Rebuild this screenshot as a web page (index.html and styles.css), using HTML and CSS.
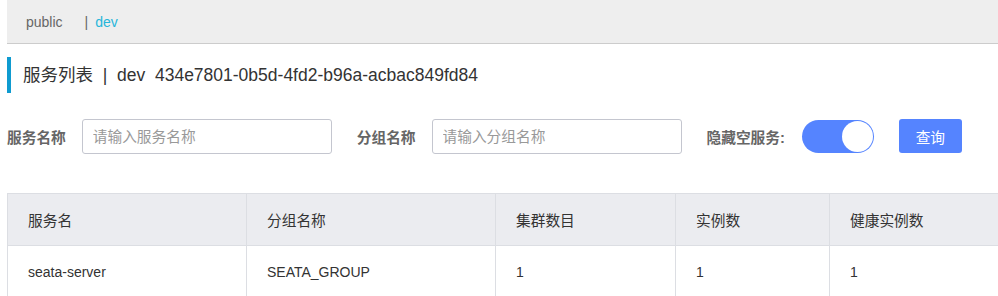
FILE: index.html
```html
<!DOCTYPE html>
<html lang="zh-CN">
<head>
<meta charset="UTF-8">
<meta name="viewport" content="width=device-width, initial-scale=1.0">
<title>服务列表</title>
<link rel="stylesheet" href="styles.css">
</head>
<body>
    <div class="page">
        <!-- Namespace bar -->
        <div class="ns-bar">
            <span class="ns-item">public</span>
            <span class="ns-sep">|</span>
            <span class="ns-item active">dev</span>
        </div>

        <!-- Page title -->
        <h1 class="page-title">服务列表&nbsp;&nbsp;|&nbsp;&nbsp;dev&nbsp;&nbsp;434e7801-0b5d-4fd2-b96a-acbac849fd84</h1>

        <!-- Search form -->
        <div class="search-row">
            <label class="field-label">服务名称</label>
            <input class="field-input" type="text" placeholder="请输入服务名称">
            <label class="field-label">分组名称</label>
            <input class="field-input" type="text" placeholder="请输入分组名称">
            <label class="field-label switch-label">隐藏空服务:</label>
            <span class="switch on"><span class="switch-knob"></span></span>
            <button class="query-btn">查询</button>
        </div>

        <!-- Service table -->
        <table class="service-table">
            <colgroup>
                <col style="width: 239px">
                <col style="width: 249px">
                <col style="width: 180px">
                <col style="width: 154px">
                <col>
            </colgroup>
            <thead>
                <tr>
                    <th>服务名</th>
                    <th>分组名称</th>
                    <th>集群数目</th>
                    <th>实例数</th>
                    <th>健康实例数</th>
                </tr>
            </thead>
            <tbody>
                <tr>
                    <td>seata-server</td>
                    <td>SEATA_GROUP</td>
                    <td>1</td>
                    <td>1</td>
                    <td>1</td>
                </tr>
            </tbody>
        </table>
    </div>
</body>
</html>
```

FILE: styles.css
```css
/* General Reset */
* {
    margin: 0;
    padding: 0;
    box-sizing: border-box;
}

body {
    width: 100%;
    font-family: "Liberation Sans", Arial, "Noto Sans CJK SC", sans-serif;
    font-size: 14px;
    color: #333;
    background: #fff;
    overflow: hidden;
}

.page {
    padding-left: 7px;
}

/* Namespace bar */
.ns-bar {
    display: flex;
    align-items: center;
    height: 44px;
    padding-left: 19px;
    background-color: #eeeeee;
    border-bottom: 1px solid #cccccc;
    color: #666;
    font-size: 14px;
}

.ns-sep {
    margin-left: 22px;
    margin-right: 7px;
    color: #666;
}

.ns-item.active {
    color: #27b6da;
}

/* Title */
.page-title {
    margin-top: 13px;
    height: 36px;
    line-height: 37px;
    padding-left: 12px;
    border-left: 4px solid #0f9bd0;
    font-size: 17.5px;
    font-weight: normal;
    color: #333;
}

/* Search form */
.search-row {
    display: flex;
    align-items: center;
    margin-top: 26px;
    height: 34px;
}

.field-label {
    font-size: 14.7px;
    font-weight: bold;
    color: #666;
    margin-right: 16px;
}

.field-label.switch-label {
    margin-right: 17px;
}

.field-input {
    width: 250px;
    height: 35px;
    padding: 2px 10px 0;
    margin-right: 25px;
    border: 1px solid #c4c6cf;
    border-radius: 3px;
    font-family: inherit;
    font-size: 14.7px;
    color: #333;
    outline: none;
}

.field-input::placeholder {
    color: #999;
}

.switch {
    display: inline-flex;
    align-items: center;
    justify-content: flex-end;
    width: 72px;
    height: 33px;
    padding: 1px;
    border-radius: 17px;
    background-color: #5584ff;
    margin-right: 25px;
}

.switch-knob {
    width: 31px;
    height: 31px;
    border-radius: 50%;
    background-color: #fff;
}

.query-btn {
    width: 63px;
    height: 34px;
    border: none;
    border-radius: 3px;
    background-color: #5584ff;
    color: #fff;
    font-family: inherit;
    font-size: 14.7px;
    cursor: pointer;
}

/* Table */
.service-table {
    margin-top: 40px;
    width: 992px;
    border-collapse: collapse;
    table-layout: fixed;
}

.service-table th,
.service-table td {
    height: 52px;
    padding: 0 20px;
    text-align: left;
    border: 1px solid #dcdee3;
    font-size: 14px;
    color: #333;
    white-space: nowrap;
}

.service-table th {
    font-size: 14.7px;
    font-weight: normal;
    background-color: #ebecf0;
}
```
